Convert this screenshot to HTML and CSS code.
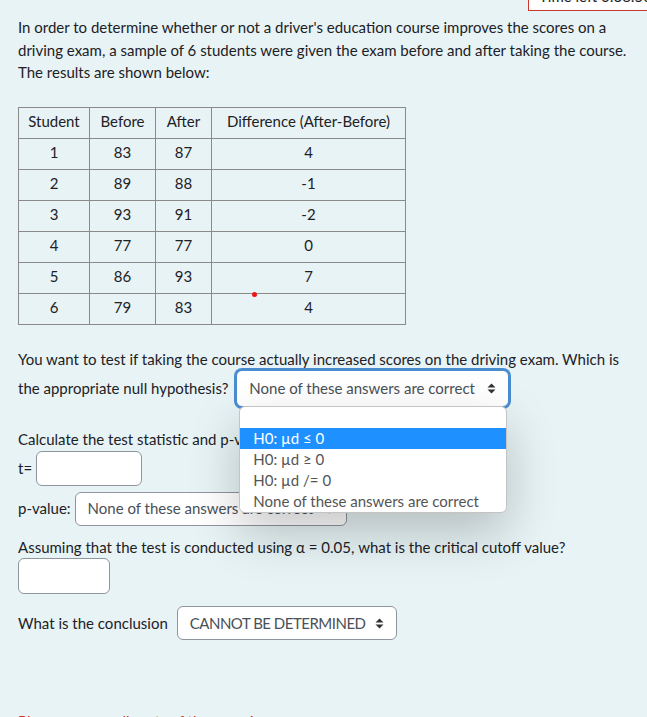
FILE: index.html
```html
<!DOCTYPE html>
<html lang="en">
<head>
    <meta charset="UTF-8">
    <meta name="viewport" content="width=device-width, initial-scale=1.0">
    <title>Quiz question</title>

    <link rel="stylesheet" href="styles.css">
</head>
<body>

    <div class="timer">Time left 0:38:56</div>

    <div class="question">
        <p class="intro">In order to determine whether or not a driver's education course improves the scores on a driving exam, a sample of 6 students were given the exam before and after taking the course. The results are shown below:</p>

        <table class="scores">
            <tr><th class="c1">Student</th><th class="c2">Before</th><th class="c3">After</th><th class="c4">Difference (After-Before)</th></tr>
            <tr><td>1</td><td>83</td><td>87</td><td>4</td></tr>
            <tr><td>2</td><td>89</td><td>88</td><td>-1</td></tr>
            <tr><td>3</td><td>93</td><td>91</td><td>-2</td></tr>
            <tr><td>4</td><td>77</td><td>77</td><td>0</td></tr>
            <tr><td>5</td><td>86</td><td>93</td><td>7</td></tr>
            <tr><td>6</td><td>79</td><td>83</td><td>4</td></tr>
        </table>

        <p class="hyp">You want to test if taking the course actually increased scores on the driving exam. Which is the appropriate null hypothesis?
            <span class="select-wrap">
                <span class="select focused">None of these answers are correct <svg class="arrows" width="9" height="11" viewBox="0 0 9 11"><path d="M4.5 0.5 L8.5 4.5 H0.5 Z M4.5 10.5 L8.5 6.5 H0.5 Z" fill="#333"/></svg></span>
                <span class="menu">
                    <span class="opt"></span>
                    <span class="opt picked">H0: µd ≤ 0</span>
                    <span class="opt">H0: µd ≥ 0</span>
                    <span class="opt">H0: µd /= 0</span>
                    <span class="opt">None of these answers are correct</span>
                </span>
            </span>
        </p>

        <p class="calc">Calculate the test statistic and p-value.</p>
        <div class="row trow">t= <span class="input small"></span></div>
        <div class="row prow">p-value: <span class="select">None of these answers are correct <svg class="arrows" width="9" height="11" viewBox="0 0 9 11"><path d="M4.5 0.5 L8.5 4.5 H0.5 Z M4.5 10.5 L8.5 6.5 H0.5 Z" fill="#333"/></svg></span></div>

        <p class="assume">Assuming that the test is conducted using α = 0.05, what is the critical cutoff value?</p>
        <span class="input cutoff"></span>

        <div class="row crow">What is the conclusion <span class="select caps">CANNOT BE DETERMINED <svg class="arrows" width="9" height="11" viewBox="0 0 9 11"><path d="M4.5 0.5 L8.5 4.5 H0.5 Z M4.5 10.5 L8.5 6.5 H0.5 Z" fill="#333"/></svg></span></div>

        <p class="note">Please answer all parts of the question.</p>
    </div>

    <span class="dot"></span>

</body>
</html>
```

FILE: styles.css
```css
body {
    margin: 0;
    background-color: #e7f3f5;
    font-family: Lato, "Open Sans", sans-serif;
    font-size: 15px;
    line-height: 22.5px;
    color: #1d2125;
    position: relative;
    overflow: hidden;
    height: 717px;
}

.timer {
    position: absolute;
    top: -15px;
    left: 528px;
    width: 140px;
    height: 24px;
    background: #fff;
    border: 1px solid #c9382a;
    padding-left: 10px;
    line-height: 20px;
    overflow: hidden;
}

.question {
    width: 622px;
    padding-left: 18px;
    padding-top: 16px;
}

p {
    margin: 0;
}

.intro {
    margin-bottom: 23px;
}

/* table of scores */
.scores {
    border-collapse: collapse;
    text-align: center;
}
.scores th,
.scores td {
    border: 1px solid #8a8a8a;
    height: 28px;
    padding: 0 0 2px 0;
    font-weight: normal;
}
.c1 { width: 70px; }
.c2 { width: 65px; }
.c3 { width: 55px; }
.c4 { width: 193px; }

.hyp {
    margin-top: 23px;
}

.select-wrap {
    position: relative;
    display: inline-block;
}

.select {
    display: inline-flex;
    align-items: center;
    gap: 12px;
    height: 34px;
    box-sizing: border-box;
    padding: 0 12px 0 12px;
    border: 1px solid #8f959e;
    border-radius: 6px;
    background: #fff;
    color: #495057;
    vertical-align: baseline;
}
.select.focused {
    height: 37px;
    border-color: #4a8cd0;
    box-shadow: 0 0 0 2px #4a8cd0;
    margin-left: 4px;
}
.select.caps {
    letter-spacing: -0.5px;
    gap: 10px;
}
.arrows {
    flex: none;
}

.menu {
    position: absolute;
    top: 36px;
    left: 7px;
    width: 266px;
    background: #fff;
    border: 1px solid #c4c4c4;
    border-radius: 6px;
    box-shadow: 0 20px 50px rgba(0, 0, 0, 0.22);
    overflow: hidden;
    z-index: 5;
}
.opt {
    display: block;
    height: 21px;
    line-height: 21px;
    padding-left: 13px;
    color: #555;
    white-space: nowrap;
}
.opt.picked {
    background: #1e90ff;
    color: #fff;
}

.calc {
    margin-top: 21px;
}

.row {
    display: flex;
    align-items: center;
    gap: 4px;
}

.input {
    display: inline-block;
    box-sizing: border-box;
    background: #fff;
    border: 1px solid #8f959e;
    border-radius: 6px;
}
.small {
    width: 106px;
    height: 35px;
}
.prow {
    margin-top: 6px;
}
.assume {
    margin-top: 10px;
}
.cutoff {
    display: block;
    width: 92px;
    height: 36px;
}
.crow {
    margin-top: 12px;
    gap: 9px;
}

.note {
    margin-top: 70px;
    color: #ca3120;
}

.dot {
    position: absolute;
    left: 252px;
    top: 292px;
    width: 5px;
    height: 5px;
    border-radius: 50%;
    background: #e8161b;
}
```
